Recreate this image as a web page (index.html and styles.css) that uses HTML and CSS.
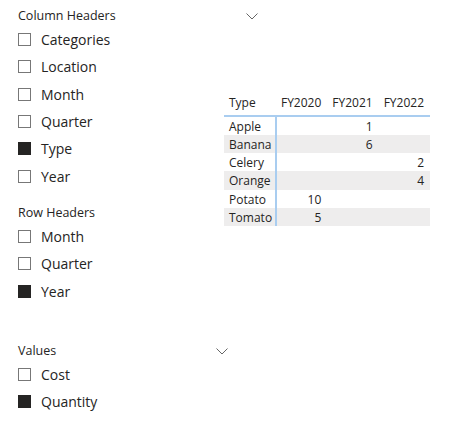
FILE: index.html
```html
<!DOCTYPE html>
<html>
<head>
<meta charset="utf-8">
<link rel="stylesheet" href="styles.css">
</head>
<body>
<div class="page">
  <div class="left">
    <div class="group">
      <div class="head"><span>Column Headers</span><svg class="chev chev1" width="12" height="7" viewBox="0 0 12 7"><path d="M0.5 0.5 L6 6 L11.5 0.5" fill="none" stroke="#666" stroke-width="1"/></svg></div>
      <div class="item"><span class="box"></span>Categories</div>
      <div class="item"><span class="box"></span>Location</div>
      <div class="item"><span class="box"></span>Month</div>
      <div class="item"><span class="box"></span>Quarter</div>
      <div class="item"><span class="box on"></span>Type</div>
      <div class="item"><span class="box"></span>Year</div>
    </div>
    <div class="group g2">
      <div class="head"><span>Row Headers</span></div>
      <div class="item"><span class="box"></span>Month</div>
      <div class="item"><span class="box"></span>Quarter</div>
      <div class="item"><span class="box on"></span>Year</div>
    </div>
    <div class="group g3">
      <div class="head"><span>Values</span><svg class="chev chev2" width="12" height="7" viewBox="0 0 12 7"><path d="M0.5 0.5 L6 6 L11.5 0.5" fill="none" stroke="#666" stroke-width="1"/></svg></div>
      <div class="item"><span class="box"></span>Cost</div>
      <div class="item"><span class="box on"></span>Quantity</div>
    </div>
  </div>
  <table class="matrix">
    <colgroup><col class="k0"><col class="k1"><col class="k1"><col class="k1"></colgroup>
    <thead>
      <tr><th class="c0">Type</th><th>FY2020</th><th>FY2021</th><th>FY2022</th></tr>
    </thead>
    <tbody>
      <tr><td class="c0">Apple</td><td></td><td>1</td><td></td></tr>
      <tr class="alt"><td class="c0">Banana</td><td></td><td>6</td><td></td></tr>
      <tr><td class="c0">Celery</td><td></td><td></td><td>2</td></tr>
      <tr class="alt"><td class="c0">Orange</td><td></td><td></td><td>4</td></tr>
      <tr><td class="c0">Potato</td><td>10</td><td></td><td></td></tr>
      <tr class="alt"><td class="c0">Tomato</td><td>5</td><td></td><td></td></tr>
    </tbody>
  </table>
</div>
</body>
</html>
```
FILE: styles.css
```css
html, body { margin: 0; padding: 0; background: #fff; }
body { font-family: "Open Sans", Lato, sans-serif; color: #252423; }
.page { display: flex; padding: 6px 0 0 18px; position: relative; width: 474px; height: 422px; box-sizing: border-box; }
.left { width: 250px; }
.group { display: flex; flex-direction: column; }
.head { height: 20px; font-size: 12.5px; line-height: 20px; position: relative; width: 240px; color: #252423; }
.chev { position: absolute; top: 7px; }
.chev1 { left: 228px; }
.chev2 { left: 198px; }
.item { display: flex; align-items: center; height: 27.3px; font-size: 14px; color: #252423; }
.box { width: 13px; height: 13px; border: 1px solid #777; box-sizing: border-box; margin-right: 10px; background: #fff; }
.box.on { background: #252423; border-color: #252423; }
.g2 { margin-top: 13px; }
.g3 { margin-top: 36px; }
.matrix { position: absolute; left: 224px; top: 90px; border-collapse: collapse; font-size: 12px; width: 206px; table-layout: fixed; color: #252423; }
.k0 { width: 52px; }
.k1 { width: 51.3px; }
.matrix th { font-weight: normal; text-align: right; height: 25px; padding: 0 6px 0 0; border-bottom: 2px solid #a9cdf0; white-space: nowrap; }
.matrix td { height: 18.2px; padding: 1px 6px 0 0; box-sizing: border-box; text-align: right; line-height: 17px; }
.matrix .c0 { text-align: left; padding-left: 5px; }
.matrix td.c0 { border-right: 2px solid #a9cdf0; }
.matrix tr.alt td { background: #eeeded; }
```
